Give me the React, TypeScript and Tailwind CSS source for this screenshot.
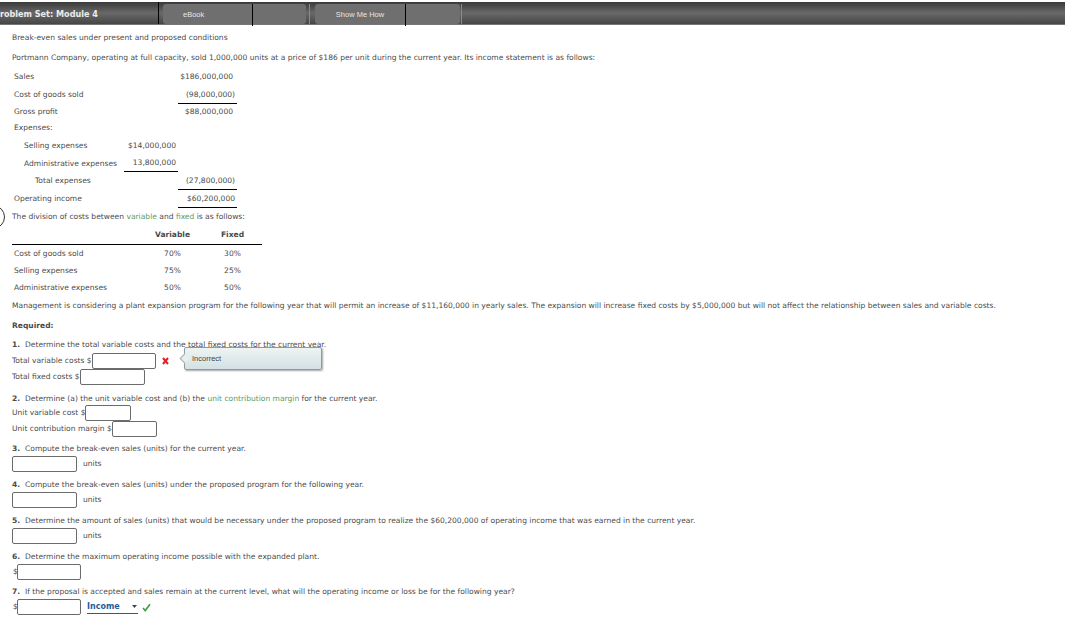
import React from "react";

function Row({ h, className = "", children }: { h: string; className?: string; children?: React.ReactNode }) {
  return <div className={`${h} flex items-center whitespace-nowrap ${className}`}>{children}</div>;
}

function Box({ w }: { w: string }) {
  return <div className={`${w} h-[16px] shrink-0 bg-white border border-[#6b6b6b] rounded-[2px]`} />;
}

function B({ children }: { children: React.ReactNode }) {
  return <span className="font-bold">{children}</span>;
}

function Num({ children }: { children: React.ReactNode }) {
  return <span className="font-bold mr-[2.5px]">{children}</span>;
}

function G({ children }: { children: React.ReactNode }) {
  return <span className="text-[#5b9a62]">{children}</span>;
}

function IncomeRow({ h, label, col2, col3, line2, line3, indent = "pl-[2px]", pr3 = "pr-[2px]" }: { h: string; label?: string; col2?: string; col3?: string; line2?: boolean; line3?: boolean; indent?: string; pr3?: string }) {
  return (
    <div className={`${h} grid grid-cols-[112px_54px_59px] items-stretch whitespace-nowrap`}>
      <div className={`flex items-center ${indent}`}>{label}</div>
      <div className={`flex items-center justify-end pr-[2px] ${line2 ? "border-b border-black" : ""}`}>{col2}</div>
      <div className={`flex items-center justify-end ${pr3} ${line3 ? "border-b border-black" : ""}`}>{col3}</div>
    </div>
  );
}

function SplitRow({ h, label, a, b, head }: { h: string; label?: string; a: string; b: string; head?: boolean }) {
  return (
    <div className={`${h} grid grid-cols-[130px_61px_59px] items-center whitespace-nowrap ${head ? "font-bold border-b border-black" : ""}`}>
      <div className="pl-[2px]">{label}</div>
      <div className="text-center">{a}</div>
      <div className="text-center">{b}</div>
    </div>
  );
}

export default function App() {
  return (
    <div className="relative w-[1065px] h-[622px] overflow-hidden bg-white text-[7.55px] text-[#4a4a4a] font-['DejaVu_Sans',Verdana,sans-serif]">
      <div className="mt-[2px] h-[23px] flex bg-gradient-to-b from-[#3a3a3a] via-[#696969] to-[#464646] border-b border-[#777]">
        <div className="w-[159px] h-full overflow-hidden border-r border-black flex items-center pt-[3px]">
          <span className="-ml-[6px] text-[8.1px] font-bold text-[#ececec] whitespace-nowrap">Problem Set: Module 4</span>
        </div>
        <div className="ml-[4px] w-[143px] h-[20px] mt-[2px] rounded-[3px] bg-[#6f6f6f] flex">
          <div className="w-[90px] border-r border-black flex items-center pl-[20px] text-[7.5px] text-[#e6e6e6] font-['Liberation_Sans',sans-serif] h-[22px]">
            eBook
          </div>
        </div>
        <div className="ml-[3px] w-px h-[20px] mt-[2px] bg-[#8a8a8a]" />
        <div className="ml-[5px] w-[145px] h-[20px] mt-[2px] rounded-[3px] bg-[#6f6f6f] flex">
          <div className="w-[91px] border-r border-black flex items-center justify-center text-[7.5px] text-[#e6e6e6] font-['Liberation_Sans',sans-serif] h-[22px]">
            Show Me How
          </div>
        </div>
        <div className="ml-[1px] w-px h-[20px] mt-[2px] bg-[#8a8a8a]" />
      </div>

      <div className="pl-[12px] pt-[3px]">
        <Row h="h-[20px]">Break-even sales under present and proposed conditions</Row>
        <Row h="h-[20px]">Portmann Company, operating at full capacity, sold 1,000,000 units at a price of $186 per unit during the current year. Its income statement is as follows:</Row>

        <IncomeRow h="h-[18px]" label="Sales" col3="$186,000,000" pr3="pr-[4px]" />
        <IncomeRow h="h-[18px]" label="Cost of goods sold" col3="(98,000,000)" line3 />
        <IncomeRow h="h-[15px]" label="Gross profit" col3="$88,000,000" pr3="pr-[4px]" />
        <IncomeRow h="h-[18px]" label="Expenses:" />
        <IncomeRow h="h-[18px]" label="Selling expenses" col2="$14,000,000" indent="pl-[12px]" />
        <IncomeRow h="h-[17px]" label="Administrative expenses" col2="13,800,000" line2 indent="pl-[12px]" />
        <IncomeRow h="h-[18px]" label="Total expenses" col3="(27,800,000)" line3 indent="pl-[23px]" />
        <IncomeRow h="h-[18px]" label="Operating income" col3="$60,200,000" line3 />
        <Row h="h-[18px]">
          The division of costs between&nbsp;<G>variable</G>&nbsp;and&nbsp;<G>fixed</G>&nbsp;is as follows:
        </Row>

        <div className="w-[250px]">
          <SplitRow h="h-[19px]" a="Variable" b="Fixed" head />
          <SplitRow h="h-[17px]" label="Cost of goods sold" a="70%" b="30%" />
          <SplitRow h="h-[17px]" label="Selling expenses" a="75%" b="25%" />
          <SplitRow h="h-[17px]" label="Administrative expenses" a="50%" b="50%" />
        </div>

        <Row h="h-[19px]" className="pt-[1px]">
          Management is considering a plant expansion program for the following year that will permit an increase of $11,160,000 in yearly sales. The expansion will increase fixed costs by $5,000,000 but will not affect the relationship between sales and variable costs.
        </Row>
        <Row h="h-[21px]"><B>Required:</B></Row>
        <Row h="h-[17px]"><Num>1.</Num>&nbsp;Determine the total variable costs and the total fixed costs for the current year.</Row>

        <Row h="h-[16px]">
          Total variable costs $<Box w="w-[64px]" />
          <svg className="ml-[6px]" width="7" height="8" viewBox="0 0 7 8"><path d="M1 1l5 6M6 1l-5 6" stroke="#e3202a" strokeWidth="2" fill="none" /></svg>
        </Row>
        <Row h="h-[16px]">Total fixed costs $<Box w="w-[65px]" /></Row>
        <Row h="h-[20px]" className="pt-[7px]"><Num>2.</Num>&nbsp;Determine (a) the unit variable cost and (b) the&nbsp;<G>unit contribution margin</G>&nbsp;for the current year.</Row>
        <Row h="h-[16px]">Unit variable cost $<Box w="w-[46px]" /></Row>
        <Row h="h-[16px]">Unit contribution margin $<Box w="w-[45px]" /></Row>

        <Row h="h-[19px]" className="pt-[5px]"><Num>3.</Num>&nbsp;Compute the break-even sales (units) for the current year.</Row>
        <Row h="h-[16px]"><Box w="w-[65px]" /><span className="ml-[6px]">units</span></Row>
        <Row h="h-[20px]" className="pt-[5px]"><Num>4.</Num>&nbsp;Compute the break-even sales (units) under the proposed program for the following year.</Row>
        <Row h="h-[16px]"><Box w="w-[65px]" /><span className="ml-[6px]">units</span></Row>
        <Row h="h-[20px]" className="pt-[5px]"><Num>5.</Num>&nbsp;Determine the amount of sales (units) that would be necessary under the proposed program to realize the $60,200,000 of operating income that was earned in the current year.</Row>
        <Row h="h-[16px]"><Box w="w-[65px]" /><span className="ml-[6px]">units</span></Row>
        <Row h="h-[20px]" className="pt-[5px]"><Num>6.</Num>&nbsp;Determine the maximum operating income possible with the expanded plant.</Row>
        <Row h="h-[16px]"><span className="w-[5px] ml-px -mr-[1px]">$</span><Box w="w-[64px]" /></Row>
        <Row h="h-[19px]" className="pt-[4px]"><Num>7.</Num>&nbsp;If the proposal is accepted and sales remain at the current level, what will the operating income or loss be for the following year?</Row>
        <Row h="h-[16px]">
          <span className="w-[5px] ml-px -mr-[1px]">$</span><Box w="w-[64px]" />
          <div className="ml-[6px] w-[51px] h-[13px] border-b border-[#1f5f9e] flex items-center justify-between">
            <span className="font-bold text-[8px] text-[#1f5f9e]">Income</span>
            <svg className="mr-px" width="5" height="3" viewBox="0 0 5 3"><path d="M0 0h5L2.5 3z" fill="#444" /></svg>
          </div>
          <svg className="ml-[4px]" width="9" height="9" viewBox="0 0 9 9"><path d="M1 5l2.2 2.6L8 1.2" stroke="#3aa03a" strokeWidth="1.6" fill="none" /></svg>
        </Row>
      </div>

      <div className="absolute left-[-19px] top-[205px] w-[24px] h-[24px] rounded-full border border-[#333]" />

      <div className="absolute left-[184px] top-[347px] w-[138px] h-[23px] rounded-[2px] border border-[#8f9a9c] bg-gradient-to-b from-[#eef4f2] to-[#d3e1e5] shadow-[1px_1px_2px_rgba(0,0,0,0.35)] flex items-center pl-[7px] pt-[1px] text-[7.5px] text-[#444] font-['Liberation_Sans',sans-serif]">
        Incorrect
        <div className="absolute left-[-4px] top-[7px] w-[7px] h-[7px] rotate-45 bg-[#e8f0ef] border-l border-b border-[#a6b0b2]" />
      </div>
    </div>
  );
}
